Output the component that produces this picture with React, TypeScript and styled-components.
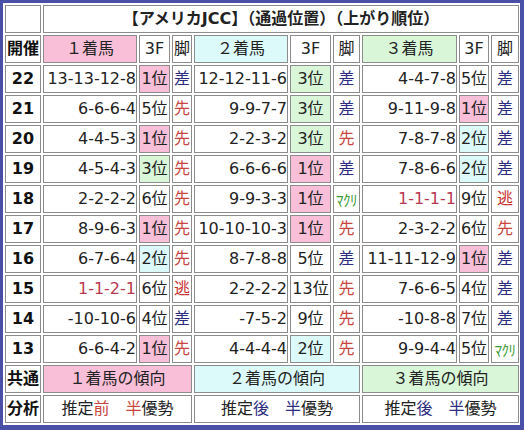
import styled, { createGlobalStyle } from "styled-components";

type Leg = "差" | "先" | "逃" | "ﾏｸﾘ";

interface Entry {
  pass: string;
  rank: string;
  leg: Leg;
  red?: boolean;
}

interface RaceRow {
  year: string;
  horses: [Entry, Entry, Entry];
}

const rows: RaceRow[] = [
  { year: "22", horses: [{ pass: "13-13-12-8", rank: "1位", leg: "差" }, { pass: "12-12-11-6", rank: "3位", leg: "差" }, { pass: "4-4-7-8", rank: "5位", leg: "差" }] },
  { year: "21", horses: [{ pass: "6-6-6-4", rank: "5位", leg: "先" }, { pass: "9-9-7-7", rank: "3位", leg: "差" }, { pass: "9-11-9-8", rank: "1位", leg: "差" }] },
  { year: "20", horses: [{ pass: "4-4-5-3", rank: "1位", leg: "先" }, { pass: "2-2-3-2", rank: "3位", leg: "先" }, { pass: "7-8-7-8", rank: "2位", leg: "差" }] },
  { year: "19", horses: [{ pass: "4-5-4-3", rank: "3位", leg: "先" }, { pass: "6-6-6-6", rank: "1位", leg: "差" }, { pass: "7-8-6-6", rank: "2位", leg: "差" }] },
  { year: "18", horses: [{ pass: "2-2-2-2", rank: "6位", leg: "先" }, { pass: "9-9-3-3", rank: "1位", leg: "ﾏｸﾘ" }, { pass: "1-1-1-1", rank: "9位", leg: "逃", red: true }] },
  { year: "17", horses: [{ pass: "8-9-6-3", rank: "1位", leg: "先" }, { pass: "10-10-10-3", rank: "1位", leg: "先" }, { pass: "2-3-2-2", rank: "6位", leg: "先" }] },
  { year: "16", horses: [{ pass: "6-7-6-4", rank: "2位", leg: "先" }, { pass: "8-7-8-8", rank: "5位", leg: "差" }, { pass: "11-11-12-9", rank: "1位", leg: "差" }] },
  { year: "15", horses: [{ pass: "1-1-2-1", rank: "6位", leg: "逃", red: true }, { pass: "2-2-2-2", rank: "13位", leg: "先" }, { pass: "7-6-6-5", rank: "4位", leg: "差" }] },
  { year: "14", horses: [{ pass: "-10-10-6", rank: "4位", leg: "差" }, { pass: "-7-5-2", rank: "9位", leg: "先" }, { pass: "-10-8-8", rank: "7位", leg: "差" }] },
  { year: "13", horses: [{ pass: "6-6-4-2", rank: "1位", leg: "先" }, { pass: "4-4-4-4", rank: "2位", leg: "先" }, { pass: "9-9-4-4", rank: "5位", leg: "ﾏｸﾘ" }] },
];

const PINK = "#f9bfd8";
const CYAN = "#dcfafa";
const GREEN = "#d9f6d9";
const NAVY = "#2c2c80";
const RED = "#c8463f";

const placeBg = [PINK, CYAN, GREEN];

const rankBg = (rank: string) => {
  if (rank === "1位") return PINK;
  if (rank === "2位") return CYAN;
  if (rank === "3位") return GREEN;
  return "#fff";
};

const legColor: Record<Leg, string> = {
  差: NAVY,
  先: RED,
  逃: "#c8302e",
  ﾏｸﾘ: "#3a9a34",
};

const analysis = [
  { word: "前", color: RED },
  { word: "後", color: NAVY },
  { word: "後", color: NAVY },
];

export default function App() {
  return (
    <>
      <GlobalStyle />
      <Panel>
        <Board>
          <Cell />
          <TitleCell>【アメリカJCC】（通過位置）（上がり順位）</TitleCell>

          <HeadCell>開催</HeadCell>
          {["１着馬", "２着馬", "３着馬"].map((label, i) => (
            <Frag key={label}>
              <Cell $bg={placeBg[i]}>{label}</Cell>
              <Cell>3F</Cell>
              <Cell>脚</Cell>
            </Frag>
          ))}

          {rows.map((row) => (
            <Frag key={row.year}>
              <HeadCell>{row.year}</HeadCell>
              {row.horses.map((h, i) => (
                <Frag key={i}>
                  <PassCell $red={h.red}>{h.pass}</PassCell>
                  <Cell $bg={rankBg(h.rank)}>{h.rank}</Cell>
                  <LegCell $color={legColor[h.leg]} $small={h.leg === "ﾏｸﾘ"}>
                    {h.leg}
                  </LegCell>
                </Frag>
              ))}
            </Frag>
          ))}

          <HeadCell>共通</HeadCell>
          {["１着馬の傾向", "２着馬の傾向", "３着馬の傾向"].map((label, i) => (
            <WideCell key={label} $bg={placeBg[i]}>
              {label}
            </WideCell>
          ))}

          <HeadCell>分析</HeadCell>
          {analysis.map((a, i) => (
            <WideCell key={i}>
              推定<Mark $color={a.color}>{a.word}</Mark>　<Mark $color={a.color}>半</Mark>優勢
            </WideCell>
          ))}
        </Board>
      </Panel>
    </>
  );
}

const Frag = ({ children }: { children?: React.ReactNode }) => <>{children}</>;

const GlobalStyle = createGlobalStyle`
  html, body {
    margin: 0;
    padding: 0;
  }
  body {
    width: 524px;
    height: 430px;
    overflow: hidden;
    background: #4a50a8;
    font-family: "DejaVu Sans", "Noto Sans CJK JP", sans-serif;
  }
`;

const Panel = styled.div`
  box-sizing: border-box;
  width: 517px;
  height: 422px;
  margin: 3px 0 0 3px;
  padding: 2px;
  background: #fff;
`;

const Board = styled.div`
  display: grid;
  grid-template-columns: 36px 94px 31px 20px 94px 41px 27px 95px 30px 28px;
  grid-auto-rows: 28px;
  gap: 2px;
`;

const Cell = styled.div<{ $bg?: string }>`
  box-sizing: border-box;
  display: flex;
  align-items: center;
  justify-content: center;
  border: 1px solid #8c8c8c;
  background: ${({ $bg }) => $bg ?? "#fff"};
  color: #222;
  font-size: 16px;
  line-height: 1;
  white-space: nowrap;
  overflow: hidden;
`;

const TitleCell = styled(Cell)`
  grid-column: span 9;
  font-weight: 700;
`;

const HeadCell = styled(Cell)`
  font-weight: 700;
  color: #111;
`;

const PassCell = styled(Cell)<{ $red?: boolean }>`
  justify-content: flex-end;
  padding-right: 0;
  color: ${({ $red }) => ($red ? "#b8394f" : "#222")};
`;

const LegCell = styled(Cell)<{ $color: string; $small?: boolean }>`
  color: ${({ $color }) => $color};
  font-family: ${({ $small }) => ($small ? '"Noto Sans CJK JP", sans-serif' : "inherit")};
  font-size: ${({ $small }) => ($small ? "15px" : "16px")};
  letter-spacing: ${({ $small }) => ($small ? "-0.5px" : "0")};
`;

const WideCell = styled(Cell)`
  grid-column: span 3;
`;

const Mark = styled.span<{ $color: string }>`
  color: ${({ $color }) => $color};
`;
